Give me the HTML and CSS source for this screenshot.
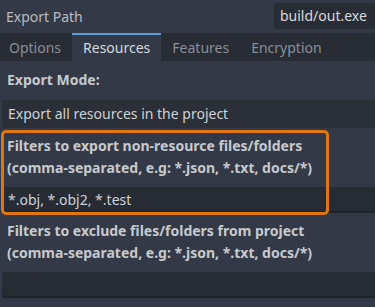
FILE: index.html
```html
<!DOCTYPE html>
<html>
<head>
<meta charset="utf-8">
<link rel="stylesheet" href="styles.css">
</head>
<body>
<div class="panel">
  <div class="path-row">
    <span class="path-label">Export Path</span>
    <span class="path-input">build/out.exe</span>
  </div>
  <div class="tabs">
    <span class="tab first">Options</span>
    <span class="tab active">Resources</span>
    <span class="tab">Features</span>
    <span class="tab">Encryption</span>
  </div>
  <div class="content">
    <div class="label mode-label">Export Mode:</div>
    <div class="dropdown">Export all resources in the project</div>
    <div class="section highlighted">
      <div class="label">Filters to export non-resource files/folders<br>(comma-separated, e.g: *.json, *.txt, docs/*)</div>
      <div class="field">*.obj, *.obj2, *.test</div>
      <div class="highlight"></div>
    </div>
    <div class="section">
      <div class="label">Filters to exclude files/folders from project<br>(comma-separated, e.g: *.json, *.txt, docs/*)</div>
      <div class="field"></div>
    </div>
  </div>
</div>
</body>
</html>
```

FILE: styles.css
```css
* { box-sizing: border-box; }
html, body {
  margin: 0;
  padding: 0;
  background: #333946;
}
body {
  width: 375px;
  height: 307px;
  overflow: hidden;
  font-family: "Noto Sans", sans-serif;
  font-size: 14px;
  color: #cfd1d5;
}
.path-row {
  display: flex;
  align-items: center;
  height: 33px;
  padding-top: 2px;
  padding-bottom: 3px;
}
.path-label {
  padding-left: 6px;
  color: #b9bcc1;
}
.path-input {
  margin-left: auto;
  width: 101px;
  height: 26px;
  line-height: 26px;
  padding-left: 6px;
  background: #272c35;
  border-radius: 3px 0 0 3px;
  color: #d8dadd;
  white-space: nowrap;
}
.tabs {
  display: flex;
  height: 28px;
  background: #272c35;
}
.tab {
  height: 28px;
  line-height: 25px;
  padding: 0 11px 0 11px;
  color: #8b8f97;
  border-top: 2px solid transparent;
}
.tab.first {
  padding: 0 11px 0 9px;
}
.tab.active {
  background: #333946;
  border-top-color: #5c9fd6;
  color: #d6d8db;
}
.content {
  display: flex;
  flex-direction: column;
}
.label {
  font-weight: bold;
  color: #c7c9cd;
  line-height: 22px;
  padding-left: 7px;
}
.mode-label {
  margin-top: 8px;
}
.dropdown {
  margin: 9px 0 0 2px;
  height: 28px;
  line-height: 28px;
  padding-left: 6px;
  background: #2a2f38;
  border-radius: 3px 0 0 3px;
  color: #cfd1d5;
}
.section {
  position: relative;
  display: flex;
  flex-direction: column;
}
.highlighted .label {
  margin-top: 6px;
}
.section .label {
  margin-top: 7px;
}
.field {
  margin: 8px 0 0 2px;
  height: 26px;
  line-height: 25px;
  padding-left: 6px;
  background: #272b34;
  border-bottom: 2px solid #1e2228;
  border-radius: 3px 0 0 3px;
  color: #cfd1d5;
}
.highlight {
  position: absolute;
  left: 1px;
  top: 2px;
  width: 328px;
  bottom: -2px;
  border: 3px solid #e0760d;
  border-radius: 5px;
  pointer-events: none;
}
```
